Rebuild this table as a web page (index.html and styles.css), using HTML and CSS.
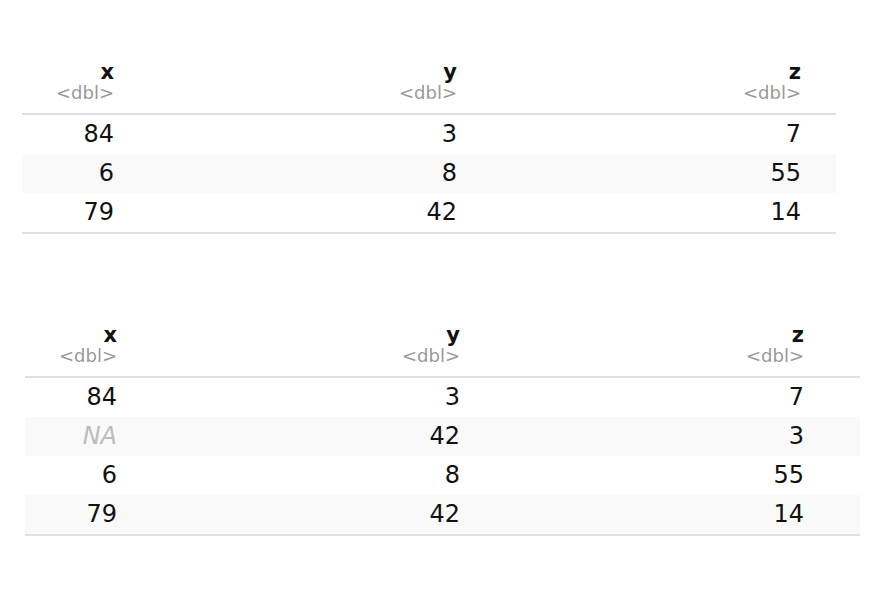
FILE: index.html
```html
<!DOCTYPE html>
<html>
<head>
<meta charset="utf-8">
<link rel="stylesheet" href="styles.css">
</head>
<body>
<div class="page">
  <div class="tbl tbl-a">
    <div class="row head">
      <div class="cell"><span class="name">x</span><span class="type">&lt;dbl&gt;</span></div>
      <div class="cell"><span class="name">y</span><span class="type">&lt;dbl&gt;</span></div>
      <div class="cell"><span class="name">z</span><span class="type">&lt;dbl&gt;</span></div>
      <div class="cell"></div>
    </div>
    <div class="row"><div class="cell">84</div><div class="cell">3</div><div class="cell">7</div><div class="cell"></div></div>
    <div class="row odd"><div class="cell">6</div><div class="cell">8</div><div class="cell">55</div><div class="cell"></div></div>
    <div class="row last"><div class="cell">79</div><div class="cell">42</div><div class="cell">14</div><div class="cell"></div></div>
  </div>

  <div class="tbl tbl-b">
    <div class="row head">
      <div class="cell"><span class="name">x</span><span class="type">&lt;dbl&gt;</span></div>
      <div class="cell"><span class="name">y</span><span class="type">&lt;dbl&gt;</span></div>
      <div class="cell"><span class="name">z</span><span class="type">&lt;dbl&gt;</span></div>
      <div class="cell"></div>
    </div>
    <div class="row"><div class="cell">84</div><div class="cell">3</div><div class="cell">7</div><div class="cell"></div></div>
    <div class="row odd"><div class="cell na">NA</div><div class="cell">42</div><div class="cell">3</div><div class="cell"></div></div>
    <div class="row"><div class="cell">6</div><div class="cell">8</div><div class="cell">55</div><div class="cell"></div></div>
    <div class="row odd last"><div class="cell">79</div><div class="cell">42</div><div class="cell">14</div><div class="cell"></div></div>
  </div>
</div>
</body>
</html>
```

FILE: styles.css
```css
html, body {
  margin: 0;
  padding: 0;
  background: #fff;
}

.page {
  padding-top: 62px;
  font-family: "DejaVu Sans", sans-serif;
  color: #111;
}

.tbl {
  display: flex;
  flex-direction: column;
}

.tbl-a {
  margin-left: 22px;
  width: 814px;
}

.tbl-b {
  margin-left: 25px;
  width: 835px;
  margin-top: 91px;
}

.row {
  display: grid;
  grid-template-columns: 92px 343px 344px 1fr;
  height: 39px;
  align-items: center;
  font-size: 24px;
  line-height: 39px;
}

.row.odd {
  background: #f9f9f9;
}

.row.last {
  border-bottom: 2px solid #e0e0e0;
}

.row.head {
  height: auto;
  align-items: end;
  padding-bottom: 9px;
  border-bottom: 2px solid #e0e0e0;
  line-height: normal;
}

.cell {
  text-align: right;
}

.head .cell {
  display: flex;
  flex-direction: column;
  align-items: flex-end;
}

.name {
  font-weight: bold;
  font-size: 21px;
  line-height: 20px;
}

.type {
  font-size: 18px;
  line-height: 22px;
  color: #999;
}

.na {
  font-style: italic;
  color: #bbb;
}
```
